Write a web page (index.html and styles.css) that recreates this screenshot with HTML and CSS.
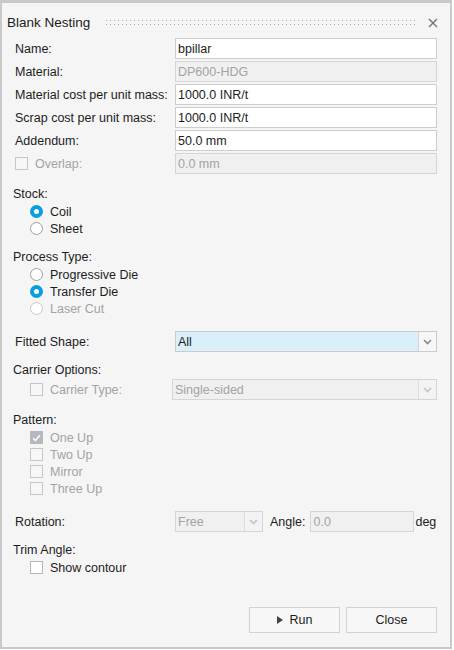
FILE: index.html
```html
<!DOCTYPE html>
<html>
<head>
<meta charset="utf-8">
<link rel="stylesheet" href="styles.css">
</head>
<body>
<div class="dialog">
  <div class="titlebar">
    <span class="title">Blank Nesting</span>
    <span class="grip"></span>
    <svg class="close" width="10" height="10" viewBox="0 0 10 10"><path d="M1 1L9 9M9 1L1 9" stroke="#707070" stroke-width="1.3" fill="none"/></svg>
  </div>
  <div class="content">
    <div class="fields">
      <div class="row"><span class="lbl">Name:</span><div class="input">bpillar</div></div>
      <div class="row"><span class="lbl">Material:</span><div class="input disabled">DP600-HDG</div></div>
      <div class="row"><span class="lbl">Material cost per unit mass:</span><div class="input">1000.0 INR/t</div></div>
      <div class="row"><span class="lbl">Scrap cost per unit mass:</span><div class="input">1000.0 INR/t</div></div>
      <div class="row"><span class="lbl">Addendum:</span><div class="input">50.0 mm</div></div>
      <div class="row"><span class="lbl chklbl"><span class="check"></span><span class="dim">Overlap:</span></span><div class="input disabled">0.0 mm</div></div>
    </div>

    <div class="section s12">
      <div class="heading">Stock:</div>
      <div class="opt"><span class="radio on"></span>Coil</div>
      <div class="opt"><span class="radio"></span>Sheet</div>
    </div>

    <div class="section s12">
      <div class="heading">Process Type:</div>
      <div class="opt"><span class="radio"></span>Progressive Die</div>
      <div class="opt"><span class="radio on"></span>Transfer Die</div>
      <div class="opt dim"><span class="radio off"></span>Laser Cut</div>
    </div>

    <div class="row s14 indent2">
      <span class="lbl">Fitted Shape:</span>
      <div class="combo">
        <div class="combo-text active">All</div>
        <div class="combo-arrow"><svg width="9" height="6" viewBox="0 0 9 6"><path d="M1 1L4.5 4.5L8 1" stroke="#8a8a8a" stroke-width="1.6" fill="none"/></svg></div>
      </div>
    </div>

    <div class="section s10">
      <div class="heading">Carrier Options:</div>
      <div class="row">
        <span class="lbl2 chklbl"><span class="check"></span><span class="dim">Carrier Type:</span></span>
        <div class="combo disabled">
          <div class="combo-text">Single-sided</div>
          <div class="combo-arrow"><svg width="9" height="6" viewBox="0 0 9 6"><path d="M1 1L4.5 4.5L8 1" stroke="#c4c4c4" stroke-width="1.6" fill="none"/></svg></div>
        </div>
      </div>
    </div>

    <div class="section s12">
      <div class="heading">Pattern:</div>
      <div class="opt dim"><span class="check checked"><svg width="9" height="8" viewBox="0 0 9 8"><path d="M1 4.2L3.4 6.5L8 1.3" stroke="#ffffff" stroke-width="1.5" fill="none"/></svg></span>One Up</div>
      <div class="opt dim"><span class="check"></span>Two Up</div>
      <div class="opt dim"><span class="check"></span>Mirror</div>
      <div class="opt dim"><span class="check"></span>Three Up</div>
    </div>

    <div class="row s14 indent2">
      <span class="lbl">Rotation:</span>
      <div class="combo disabled small">
        <div class="combo-text">Free</div>
        <div class="combo-arrow"><svg width="9" height="6" viewBox="0 0 9 6"><path d="M1 1L4.5 4.5L8 1" stroke="#c4c4c4" stroke-width="1.6" fill="none"/></svg></div>
      </div>
      <span class="angle">Angle:</span>
      <div class="input disabled angle-input">0.0</div>
      <span class="unit">deg</span>
    </div>

    <div class="section s10">
      <div class="heading">Trim Angle:</div>
      <div class="opt"><span class="check"></span>Show contour</div>
    </div>

    <div class="buttons">
      <button class="btn"><svg width="6" height="8" viewBox="0 0 6 8"><path d="M0 0L6 4L0 8Z" fill="#444"/></svg>Run</button>
      <button class="btn">Close</button>
    </div>
  </div>
</div>
</body>
</html>
```

FILE: styles.css
```css
html, body {
  margin: 0;
  padding: 0;
  background: #ffffff;
}

.dialog {
  box-sizing: border-box;
  width: 452px;
  height: 649px;
  border: 2px solid #c9c9c9;
  border-top-width: 3px;
  background: #f5f5f5;
  display: flex;
  flex-direction: column;
  font-family: "Liberation Sans", Arial, sans-serif;
  font-size: 12.5px;
  color: #1c1c1c;
}

.titlebar {
  box-sizing: border-box;
  height: 35px;
  padding: 4px 12px 0 5px;
  display: flex;
  align-items: center;
}

.title {
  font-size: 13.5px;
  color: #1c1c1c;
}

.grip {
  flex: 1;
  height: 5px;
  margin: 0 12px 0 16px;
  background-image:
    linear-gradient(90deg, #aaaaaa 1px, transparent 1px),
    linear-gradient(90deg, #aaaaaa 1px, transparent 1px);
  background-size: 4px 1px, 4px 1px;
  background-position: 0 0, 0 4px;
  background-repeat: repeat-x;
}

.close {
  display: block;
}

.content {
  flex: 1;
  display: flex;
  flex-direction: column;
  padding: 0 13px 14px 11px;
}

.fields {
  display: flex;
  flex-direction: column;
  gap: 2px;
  padding-left: 2px;
}

.row {
  height: 21px;
  display: flex;
  align-items: center;
}

.indent2 {
  padding-left: 2px;
}

.lbl {
  width: 160px;
  flex: none;
  white-space: nowrap;
}

.lbl2 {
  width: 159px;
  flex: none;
  padding-left: 17px;
  box-sizing: border-box;
  white-space: nowrap;
}

.chklbl {
  display: flex;
  align-items: center;
  gap: 7px;
}

.dim {
  color: #a3a3a3;
}

.input {
  flex: 1;
  box-sizing: border-box;
  height: 21px;
  border: 1px solid #cdcdcd;
  background: #ffffff;
  padding-left: 2px;
  display: flex;
  align-items: center;
  white-space: nowrap;
}

.input.disabled {
  background: #f0f0f0;
  color: #a3a3a3;
  border-color: #d5d5d5;
}

.section {
  display: flex;
  flex-direction: column;
}

.s10 { margin-top: 10px; }
.s12 { margin-top: 12px; }
.s14 { margin-top: 14px; }

.heading {
  height: 17px;
  line-height: 17px;
}

.opt {
  height: 17px;
  display: flex;
  align-items: center;
  padding-left: 17px;
  gap: 7px;
}

.radio {
  box-sizing: border-box;
  width: 13px;
  height: 13px;
  border-radius: 50%;
  border: 1px solid #9e9e9e;
  background: #ffffff;
  flex: none;
}

.radio.on {
  border: 4px solid #0a9edc;
  background: #ffffff;
}

.radio.off {
  border-color: #c8c8c8;
}

.check {
  box-sizing: border-box;
  width: 13px;
  height: 13px;
  border: 1px solid #b3b6bb;
  background: #ffffff;
  flex: none;
  display: flex;
  align-items: center;
  justify-content: center;
}

.dim .check, .chklbl .check {
  border-color: #c3c6cb;
  background: #f7f7f7;
}

.check.checked, .dim .check.checked {
  background: #b5b8bf;
  border-color: #b5b8bf;
}

.combo {
  flex: 1;
  box-sizing: border-box;
  height: 21px;
  border: 1px solid #cbcbcb;
  display: flex;
}

.combo-text {
  flex: 1;
  padding-left: 2px;
  display: flex;
  align-items: center;
  background: #ffffff;
}

.combo-text.active {
  background: #d9f0fb;
}

.combo-arrow {
  width: 17px;
  border-left: 1px solid #d3d3d3;
  background: #f7f7f7;
  display: flex;
  align-items: center;
  justify-content: center;
}

.combo.disabled {
  border-color: #d5d5d5;
  color: #a3a3a3;
}

.combo.disabled .combo-text {
  background: #f0f0f0;
}

.combo.disabled .combo-arrow {
  background: #f3f3f3;
  border-left-color: #dcdcdc;
}

.combo.small {
  flex: none;
  width: 88px;
}

.angle {
  margin-left: 7px;
  margin-right: 5px;
}

.angle-input {
  flex: none;
  width: 104px;
}

.unit {
  margin-left: 1px;
}

.buttons {
  margin-top: auto;
  display: flex;
  justify-content: flex-end;
  gap: 6px;
}

.btn {
  box-sizing: border-box;
  width: 91px;
  height: 26px;
  border: 1px solid #d2d2d2;
  background: #f7f7f7;
  font-family: "Liberation Sans", Arial, sans-serif;
  font-size: 12.5px;
  color: #1c1c1c;
  display: flex;
  align-items: center;
  justify-content: center;
  gap: 7px;
  padding: 0;
}
```
